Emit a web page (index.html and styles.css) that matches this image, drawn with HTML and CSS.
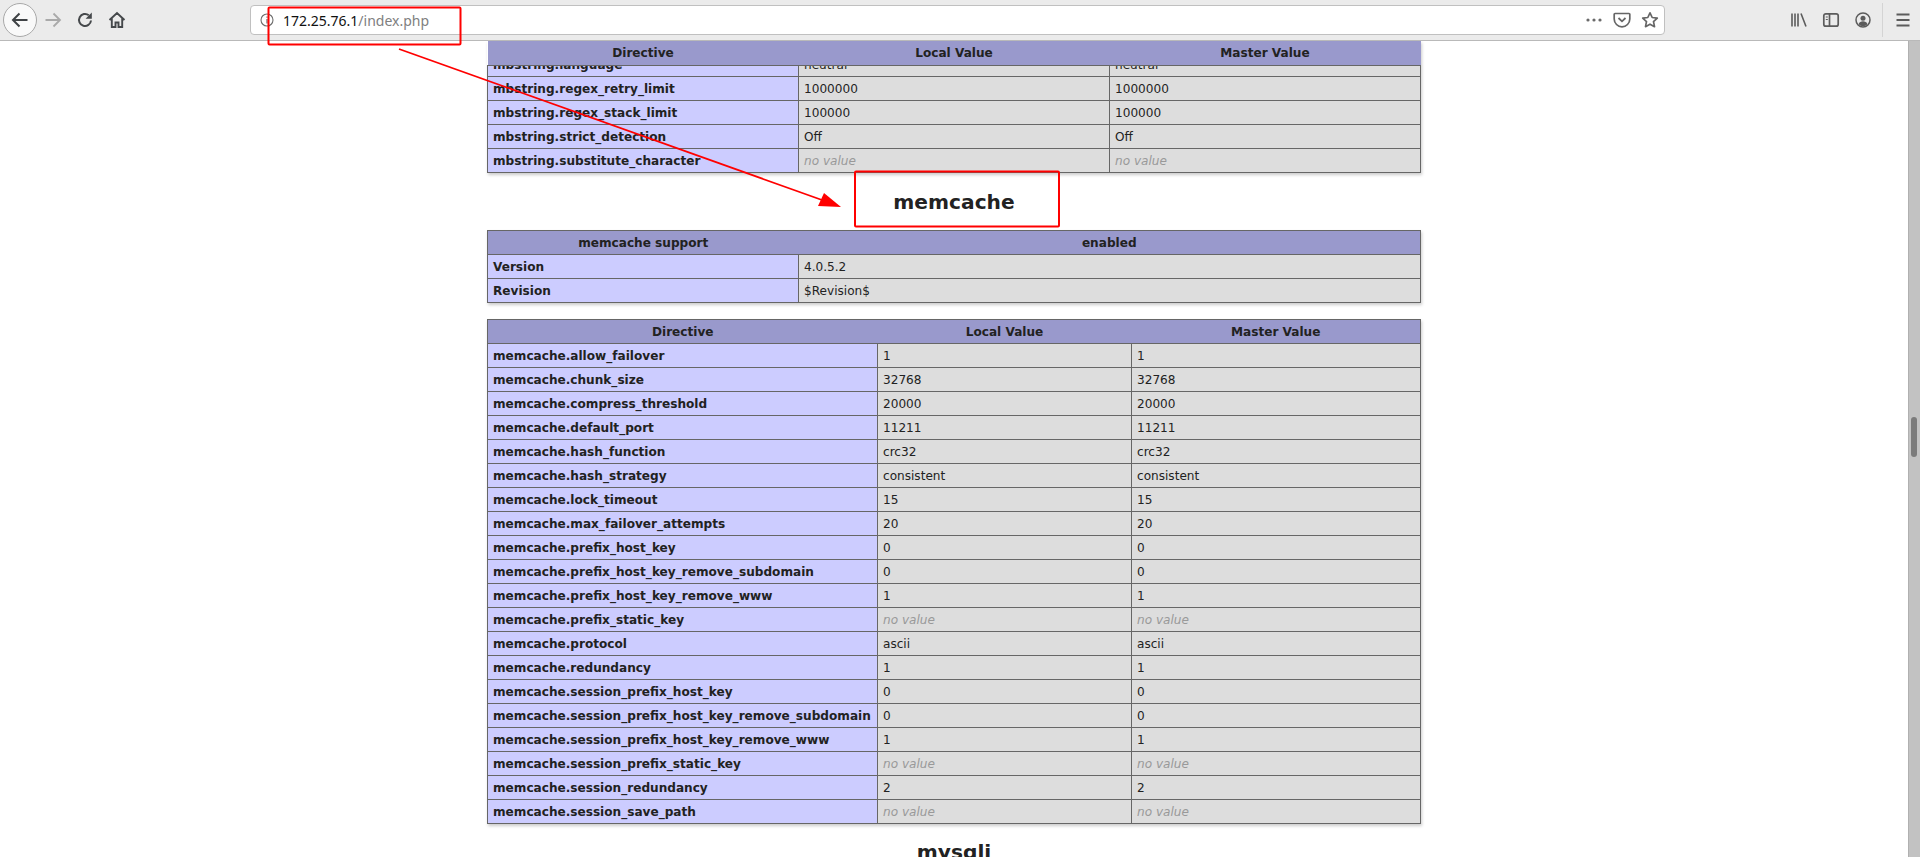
FILE: index.html
```html
<!DOCTYPE html>
<html lang="en">
<head>
<meta charset="utf-8">
<title>phpinfo()</title>
<link rel="stylesheet" href="styles.css">
</head>
<body>
<header class="toolbar">
  <button class="back" aria-label="Back"><svg width="18" height="18" viewBox="0 0 18 18"><path d="M16.500 9H2.500M8.500 2.500 2 9l6.500 6.500" fill="none" stroke="#3f4245" stroke-width="2"/></svg></button>
  <span class="tb forward"><svg width="18" height="18" viewBox="0 0 18 18"><path d="M1.500 9h14M9.500 2.500 16 9l-6.500 6.500" fill="none" stroke="#a9a9a9" stroke-width="1.800"/></svg></span>
  <span class="tb"><svg width="18" height="18" viewBox="0 0 18 18"><path d="M15 9.500A6 6 0 1 1 12.800 4.300" fill="none" stroke="#45484b" stroke-width="2"/><path d="M15.800 1.500v6.200H9.600z" fill="#45484b"/></svg></span>
  <span class="tb"><svg width="18" height="18" viewBox="0 0 18 18"><path d="M1.500 9 9 2l7.500 7M3.800 7.500V16h3.700v-4.500h3V16h3.700V7.500" fill="none" stroke="#45484b" stroke-width="1.900"/></svg></span>
  <div class="urlbar">
    <svg class="info" width="14" height="14" viewBox="0 0 14 14"><circle cx="7" cy="7" r="6" fill="none" stroke="#6d6d6d" stroke-width="1.100"/><path d="M7 6v4.500M7 3.500v1.300" stroke="#6d6d6d" stroke-width="1.200"/></svg>
    <span class="url"><span class="host">172.25.76.1</span>/index.php</span>
    <span class="url-actions">
      <svg width="18" height="18" viewBox="0 0 18 18"><g fill="#6a6a6a"><circle cx="3" cy="9" r="1.600"/><circle cx="9" cy="9" r="1.600"/><circle cx="15" cy="9" r="1.600"/></g></svg>
      <svg width="18" height="18" viewBox="0 0 18 18"><path d="M2 2.500h14a.8.8 0 0 1 .8.800V8a7.800 7.800 0 0 1-15.600 0V3.300a.8.8 0 0 1 .8-.8z" fill="none" stroke="#666" stroke-width="1.700"/><path d="m5.500 7 3.500 3.300L12.500 7" fill="none" stroke="#666" stroke-width="1.800"/></svg>
      <svg width="18" height="18" viewBox="0 0 18 18"><path d="m9 1.800 2.200 4.700 5.100.6-3.800 3.500 1 5.100L9 13.200l-4.500 2.500 1-5.100-3.800-3.500 5.100-.6z" fill="none" stroke="#666" stroke-width="1.700" stroke-linejoin="round"/></svg>
    </span>
  </div>
  <div class="tools">
    <svg width="18" height="18" viewBox="0 0 18 18"><path d="M2 2.500v13M5 2.500v13M8 2.500v13M11 2.500l5 13" fill="none" stroke="#5c5c5c" stroke-width="1.600"/></svg>
    <svg width="18" height="18" viewBox="0 0 18 18"><rect x="1.800" y="2.800" width="14.400" height="12.400" rx="2" fill="none" stroke="#5c5c5c" stroke-width="1.700"/><path d="M7.500 3v12" stroke="#5c5c5c" stroke-width="1.700"/><path d="M3.800 6h2M3.800 8.500h2" stroke="#5c5c5c" stroke-width="1.200"/></svg>
    <svg width="18" height="18" viewBox="0 0 18 18"><circle cx="9" cy="9" r="7" fill="none" stroke="#5c5c5c" stroke-width="1.500"/><circle cx="9" cy="7.200" r="2.500" fill="#5c5c5c"/><path d="M4.500 13.300c.8-2.300 2.500-3 4.500-3s3.700.7 4.500 3a6 6 0 0 1-9 0z" fill="#5c5c5c"/></svg>
    <span class="divider"></span>
    <svg width="18" height="18" viewBox="0 0 18 18"><path d="M2.500 3.500h13M2.500 9h13M2.500 14.500h13" fill="none" stroke="#5c5c5c" stroke-width="1.800"/></svg>
  </div>
</header>

<div class="viewport">
  <main class="page">
    <table class="info-table t1">
      <thead><tr><th>Directive</th><th>Local Value</th><th>Master Value</th></tr></thead>
      <tbody>
        <tr class="clipped"><td class="e"><div class="clip"><div>mbstring.language</div></div></td><td class="v"><div class="clip"><div>neutral</div></div></td><td class="v"><div class="clip"><div>neutral</div></div></td></tr>
        <tr><td class="e">mbstring.regex_retry_limit</td><td class="v">1000000</td><td class="v">1000000</td></tr>
        <tr><td class="e">mbstring.regex_stack_limit</td><td class="v">100000</td><td class="v">100000</td></tr>
        <tr><td class="e">mbstring.strict_detection</td><td class="v">Off</td><td class="v">Off</td></tr>
        <tr><td class="e">mbstring.substitute_character</td><td class="v"><i>no value</i></td><td class="v"><i>no value</i></td></tr>
      </tbody>
    </table>
    <h2>memcache</h2>
    <table class="info-table t2">
      <thead><tr><th>memcache support</th><th>enabled</th></tr></thead>
      <tbody>
        <tr><td class="e">Version</td><td class="v">4.0.5.2</td></tr>
        <tr><td class="e">Revision</td><td class="v">$Revision$</td></tr>
      </tbody>
    </table>
    <table class="info-table t3">
      <thead><tr><th>Directive</th><th>Local Value</th><th>Master Value</th></tr></thead>
      <tbody>
        <tr><td class="e">memcache.allow_failover</td><td class="v">1</td><td class="v">1</td></tr>
        <tr><td class="e">memcache.chunk_size</td><td class="v">32768</td><td class="v">32768</td></tr>
        <tr><td class="e">memcache.compress_threshold</td><td class="v">20000</td><td class="v">20000</td></tr>
        <tr><td class="e">memcache.default_port</td><td class="v">11211</td><td class="v">11211</td></tr>
        <tr><td class="e">memcache.hash_function</td><td class="v">crc32</td><td class="v">crc32</td></tr>
        <tr><td class="e">memcache.hash_strategy</td><td class="v">consistent</td><td class="v">consistent</td></tr>
        <tr><td class="e">memcache.lock_timeout</td><td class="v">15</td><td class="v">15</td></tr>
        <tr><td class="e">memcache.max_failover_attempts</td><td class="v">20</td><td class="v">20</td></tr>
        <tr><td class="e">memcache.prefix_host_key</td><td class="v">0</td><td class="v">0</td></tr>
        <tr><td class="e">memcache.prefix_host_key_remove_subdomain</td><td class="v">0</td><td class="v">0</td></tr>
        <tr><td class="e">memcache.prefix_host_key_remove_www</td><td class="v">1</td><td class="v">1</td></tr>
        <tr><td class="e">memcache.prefix_static_key</td><td class="v"><i>no value</i></td><td class="v"><i>no value</i></td></tr>
        <tr><td class="e">memcache.protocol</td><td class="v">ascii</td><td class="v">ascii</td></tr>
        <tr><td class="e">memcache.redundancy</td><td class="v">1</td><td class="v">1</td></tr>
        <tr><td class="e">memcache.session_prefix_host_key</td><td class="v">0</td><td class="v">0</td></tr>
        <tr><td class="e">memcache.session_prefix_host_key_remove_subdomain</td><td class="v">0</td><td class="v">0</td></tr>
        <tr><td class="e">memcache.session_prefix_host_key_remove_www</td><td class="v">1</td><td class="v">1</td></tr>
        <tr><td class="e">memcache.session_prefix_static_key</td><td class="v"><i>no value</i></td><td class="v"><i>no value</i></td></tr>
        <tr><td class="e">memcache.session_redundancy</td><td class="v">2</td><td class="v">2</td></tr>
        <tr><td class="e">memcache.session_save_path</td><td class="v"><i>no value</i></td><td class="v"><i>no value</i></td></tr>
      </tbody>
    </table>
    <h2 class="next">mysqli</h2>
  </main>
  <div class="scrollbar"><div class="thumb"></div></div>
</div>

<svg class="annotations" width="1920" height="857" viewBox="0 0 1920 857" aria-hidden="true">
  <rect x="268.500" y="7.500" width="192" height="37" rx="1" fill="none" stroke="#f00" stroke-width="2"/>
  <rect x="855" y="171.500" width="204" height="55" rx="1" fill="none" stroke="#f00" stroke-width="2"/>
  <path d="M399 49 822 200" fill="none" stroke="#f00" stroke-width="1.800"/>
  <path d="M841 207 818 206 824 193z" fill="#f00"/>
</svg>
</body>
</html>
```
FILE: styles.css
```css
* { box-sizing: border-box; }
html, body { margin: 0; height: 857px; overflow: hidden; background: #fff; }
body { font-family: "DejaVu Sans", sans-serif; color: #222; position: relative; }

.toolbar {
  height: 41px;
  display: flex;
  align-items: center;
  padding-left: 3px;
  background: #ebebeb;
  border-bottom: 1px solid #b9b9b9;
}
.back {
  width: 34px; height: 34px; padding: 0;
  display: flex; align-items: center; justify-content: center;
  background: #f9f9f9;
  border: 1px solid #a8a8a8;
  border-radius: 50%;
}
.tb { width: 32px; display: flex; justify-content: center; }
.urlbar {
  margin-left: 117px;
  width: 1415px;
  height: 30px;
  display: flex;
  align-items: center;
  padding: 0 4px 0 9px;
  background: #fff;
  border: 1px solid #c0c0c0;
  border-radius: 4px;
}
.url {
  margin-left: 9px;
  font-family: "Noto Sans", sans-serif;
  font-size: 14px;
  color: #808080;
}
.host { color: #111; }
.url-actions { margin-left: auto; display: flex; gap: 10px; padding-right: 1px; }
.tools { margin-left: 125px; display: flex; align-items: center; gap: 14px; }
.divider { width: 1px; height: 34px; background: #d4d4d4; margin: 0 -3px 0 -4px; }

.viewport { display: flex; height: 816px; overflow: hidden; }
.page { flex: 1; display: flex; flex-direction: column; align-items: center; }
.scrollbar { flex: none; width: 12px; background: #c2c2c2; border-left: 1px solid #b0b0b0; padding: 376px 2px 0 2px; }
.thumb { width: 6px; height: 40px; border-radius: 3px; background: #7b7b7b; }

.info-table {
  width: 934px;
  flex: none;
  table-layout: fixed;
  border-collapse: collapse;
  font-size: 12.1px;
  line-height: 15px;
  box-shadow: 1px 2px 3px #ccc;
}
.info-table th {
  height: 24px;
  padding: 5px 5px 3px;
  background: #99c;
  font-weight: bold;
  color: #222;
  text-align: center;
  border-top: 1px solid #666;
}
.t2 th:first-child, .t3 th:first-child { border-left: 1px solid #666; }
.t2 th:last-child, .t3 th:last-child { border-right: 1px solid #666; }
.info-table td { height: 24px; padding: 5px 5px 3px; border: 1px solid #666; color: #222; }
.e { background: #ccf; font-weight: bold; }
.v { background: #ddd; }
.v i { color: #999; }

.t1 th { border-top: 0; }
.t1 th:first-child, .t1 td:first-child { width: 311px; }
.t1 th:nth-child(2), .t1 td:nth-child(2) { width: 311px; }
.t2 th:first-child, .t2 td:first-child { width: 311px; }
.t3 { margin-top: 16px; }
.t3 th:first-child, .t3 td:first-child { width: 390px; }
.t3 th:nth-child(2), .t3 td:nth-child(2) { width: 254px; }

.clipped td { height: 11px; padding: 0 5px; }
.clip { height: 10px; overflow: hidden; }
.clip div { margin-top: -8px; }

h2 {
  margin: 0;
  height: 57px;
  flex: none;
  font-size: 20.2px;
  line-height: 59px;
  font-weight: bold;
  color: #222;
  text-align: center;
}
h2.next { margin-top: 15px; height: 24px; line-height: 26px; }

.annotations { position: absolute; left: 0; top: 0; pointer-events: none; }
```
